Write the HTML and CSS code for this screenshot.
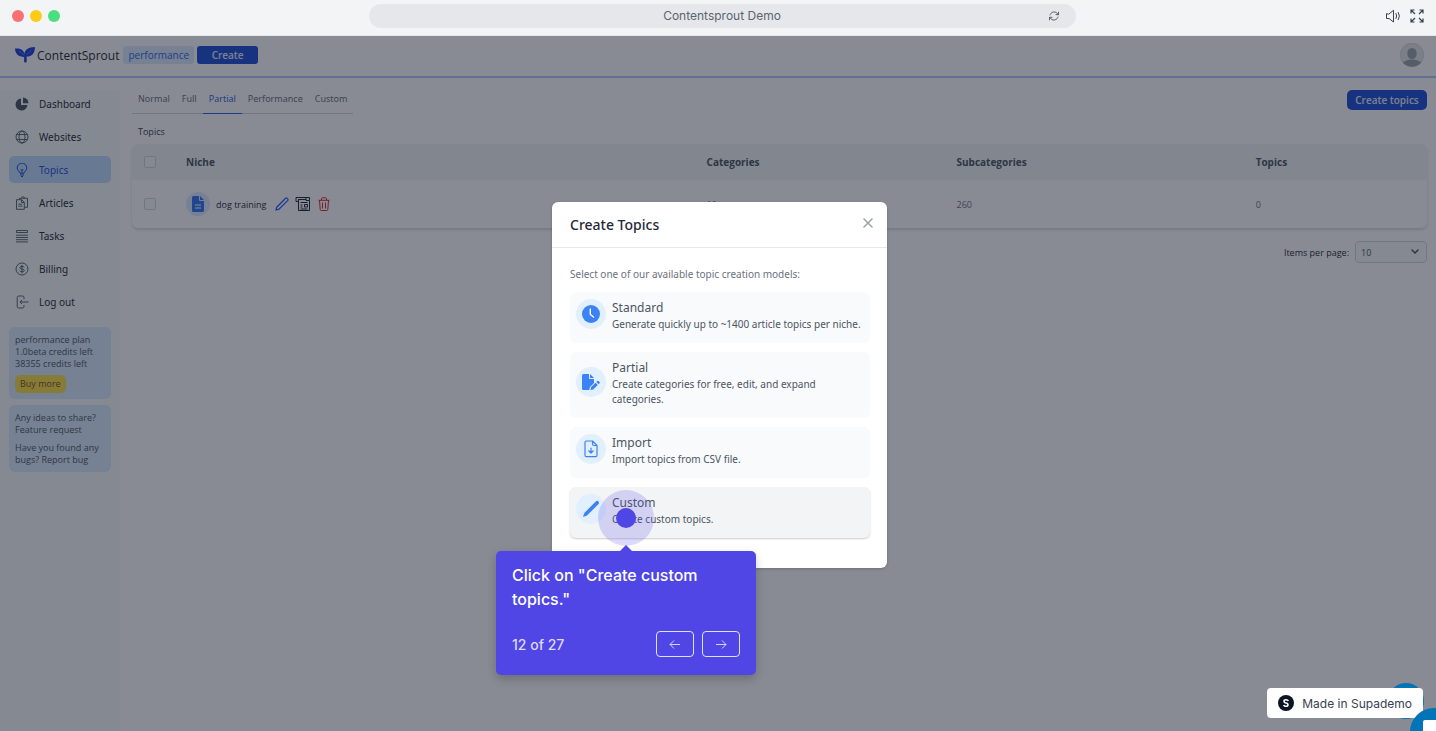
FILE: index.html
```html
<!DOCTYPE html>
<html lang="en">
<head>
<meta charset="utf-8">
<title>Contentsprout Demo</title>
<link rel="stylesheet" href="styles.css">
</head>
<body>
<div class="browser-bar">
  <div class="lights"><span class="light red"></span><span class="light yellow"></span><span class="light green"></span></div>
  <div class="address">
    <span class="address-title">Contentsprout Demo</span>
    <button class="icon-btn" aria-label="Restart"><svg width="12" height="12" viewBox="0 0 24 24" fill="none" stroke="#4b5563" stroke-width="1.8" stroke-linecap="round" stroke-linejoin="round"><path d="M16 9.3h5V4.3M3 19.600v-5h5M3 14.600l3.200 3.200a8.250 8.250 0 0 0 13.800-3.700M4 9.900a8.250 8.250 0 0 1 13.800-3.700L21 9.300"/></svg></button>
  </div>
  <div class="bar-tools">
    <button class="icon-btn" aria-label="Sound"><svg width="16" height="16" viewBox="0 0 16 16" fill="none" stroke="#374151" stroke-linecap="round" stroke-linejoin="round"><path d="M1.500 6v4.500h2.500L8.500 14V2.300L4 6zM11 5.500q1.500 2.500 0 5M13.300 4.500q2.400 3.600 0 7.200"/></svg></button>
    <button class="icon-btn" aria-label="Full screen"><svg width="14" height="14" viewBox="0 0 14 14" fill="none" stroke="#374151" stroke-width="1.200"><path d="M1 4.500V1h3.500M1 1l4 4M9.500 1H13v3.500M13 1L9 5M1 9.500V13h3.500M1 13l4-4M13 9.500V13H9.500M13 13L9 9"/></svg></button>
  </div>
</div>

<div class="stage">
  <header class="app-header">
    <svg class="logo" width="20" height="16" viewBox="0 0 20 16" fill="#1d3fe0"><path d="M0 1.500C4.500 1 8.500 2 9.500 7c.3-4 3.500-7 10.500-7-.2 6.500-3 9.500-8.300 9.600V14.500q0 1-1 1h-.6q-1 0-1-1V9.900C3.500 9.900.3 7 0 1.500z"/><path d="M4 4.200l5.300 4M16.500 3l-5 4.700" stroke="#8f98b5" stroke-width=".7"/></svg>
    <span class="brand">ContentSprout</span>
    <span class="plan-tag">performance</span>
    <button class="btn create-btn">Create</button>
    <svg class="avatar" width="24" height="24" viewBox="0 0 24 24"><circle cx="12" cy="12" r="11.700" fill="#e3e6e9" stroke="#c2c7cd" stroke-width=".6"/><ellipse cx="12" cy="10.500" rx="4.700" ry="5.500" fill="#9aa1a9"/><path d="M3 20q2-3.500 9-3.500t9 3.500q-4 3.800-9 3.800T3 20z" fill="#9aa1a9"/></svg>
  </header>

  <div class="app-body">
    <aside class="sidebar">
      <nav class="nav">
        <a class="nav-item" href="#"><svg width="14" height="14" viewBox="0 0 14 14" fill="#4b5563"><path d="M6 1.500V8h6.500A6 6 0 1 1 6 1.500z"/><path d="M8 0.500A5.800 5.800 0 0 1 13.500 6.200H8z"/></svg>Dashboard</a>
        <a class="nav-item" href="#"><svg width="14" height="14" viewBox="0 0 14 14" fill="none" stroke="#4b5563" stroke-width=".9"><circle cx="7" cy="7" r="6"/><ellipse cx="7" cy="7" rx="3" ry="6"/><path d="M1.500 4.500h11M1.500 9.500h11"/></svg>Websites</a>
        <a class="nav-item active" href="#"><svg width="14" height="14" viewBox="0 0 14 14" fill="none" stroke="#1d4ed8" stroke-width="1"><path d="M5 10.300C5 8.500 2.200 7.500 2.200 4.900a4.800 4.800 0 0 1 9.600 0C11.800 7.500 9 8.500 9 10.300zM5 12h4M6 13.500h2M7 10V7M5.500 6.500L7 7.200l1.500-.7"/></svg>Topics</a>
        <a class="nav-item" href="#"><svg width="14" height="14" viewBox="0 0 14 14" fill="none" stroke="#4b5563" stroke-width=".9"><path d="M4.500 3.500V2.300h1.700Q6.500.8 8 .8t1.800 1.500h2.700v9H9.500M1.500 3.700h5.200l2.600 2.600v7H1.500zM6.500 3.700v2.800h2.800M3.300 8.200h4M3.300 10.200h4M6.500 2.300h3.300"/></svg>Articles</a>
        <a class="nav-item" href="#"><svg width="14" height="14" viewBox="0 0 14 14" fill="none" stroke="#4b5563" stroke-width=".9"><path d="M1.500 1.500h11v2h-11zM1 6.200h12M1 8.500h12M1 10.700h12M1 12.900h12"/></svg>Tasks</a>
        <a class="nav-item" href="#"><svg width="14" height="14" viewBox="0 0 14 14" fill="none" stroke="#4b5563" stroke-width=".9"><circle cx="7" cy="7" r="6"/><path d="M9.200 5.300Q8.700 4.300 7 4.300 4.900 4.300 4.900 5.600T7 7t2.200 1.500T7 9.800q-1.900 0-2.300-1.200M7 3v8.200"/></svg>Billing</a>
        <a class="nav-item" href="#"><svg width="14" height="14" viewBox="0 0 14 14" fill="none" stroke="#4b5563" stroke-width=".9"><path d="M9 4V2.500Q9 1 7.500 1H3.700Q2.200 1 2.200 2.500v9Q2.200 13 3.700 13h3.800Q9 13 9 11.500V10M13.500 7H5M7 5L5 7l2 2"/></svg>Log out</a>
      </nav>
      <section class="side-card">
        <p>performance plan<br>1.0beta credits left<br>38355 credits left</p>
        <button class="buy-btn">Buy more</button>
      </section>
      <section class="side-card">
        <p>Any ideas to share? Feature request</p>
        <p>Have you found any bugs? Report bug</p>
      </section>
    </aside>

    <main class="content">
      <div class="toolbar">
        <nav class="tabs">
          <a class="tab" href="#">Normal</a><a class="tab" href="#">Full</a><a class="tab current" href="#">Partial</a><a class="tab" href="#">Performance</a><a class="tab" href="#">Custom</a>
        </nav>
        <button class="btn topics-btn">Create topics</button>
      </div>
      <h2 class="section-title">Topics</h2>
      <table class="topics">
        <colgroup><col class="c-check"><col class="c-niche"><col class="c-cat"><col class="c-sub"><col></colgroup>
        <thead><tr><th><input type="checkbox" aria-label="Select all"></th><th>Niche</th><th>Categories</th><th>Subcategories</th><th>Topics</th></tr></thead>
        <tbody><tr>
          <td><input type="checkbox" aria-label="Select dog training"></td>
          <td><div class="niche">
            <span class="doc-badge"><svg width="12" height="16" viewBox="0 0 12 16"><path d="M1.500 0H7v4.200q0 .8.800.8H12v9.500q0 1.500-1.500 1.500h-9Q0 16 0 14.500v-13Q0 0 1.500 0zM8 0l4 4H8z" fill="#3274f5"/><path d="M3 9h6M3 12h6" stroke="#fff" stroke-width="1.200"/></svg></span>
            <span class="niche-name">dog training</span>
            <button class="icon-btn" aria-label="Edit"><svg width="14" height="14" viewBox="0 0 14 14" fill="none" stroke="#1d5bff" stroke-width="1.200"><path d="M1 13l.8-3L10.600 1.200q.7-.6 1.300 0l.9.900q.6.600 0 1.300L4 12.200zM2 10L9.700 2.300"/></svg></button>
            <button class="icon-btn" aria-label="Articles"><svg width="16" height="16" viewBox="0 0 16 16" fill="none" stroke="#1f2937" stroke-width="1"><path d="M3.500 5.500H1V1.500h13.500v3M3.500 4v10.500h11V4.500H11V1.500M3 3.500h8M5.500 6.500h7M5.500 9h2M5.500 11h2M5.500 13h7M9.500 8.500h3v2.500h-3z"/></svg></button>
            <button class="icon-btn" aria-label="Delete"><svg width="14" height="14" viewBox="0 0 14 14" fill="none" stroke="#dc2626" stroke-width="1"><path d="M1.500 3.300h11M4.500 3V1.500q0-.7.700-.7h3.600q.7 0 .7.700V3M2.500 3.500l.7 9q.1 1 1.100 1h5.400q1 0 1.100-1l.7-9M5.500 5.500v6M8.500 5.500v6"/></svg></button>
          </div></td>
          <td>10</td><td>260</td><td>0</td>
        </tr></tbody>
      </table>
      <div class="pager">
        <label for="per-page">Items per page:</label>
        <span class="select-wrap"><select id="per-page"><option>10</option><option>25</option></select><svg width="8" height="6" viewBox="0 0 8 6" fill="none" stroke="#4b5563" stroke-width="1.500" stroke-linecap="round"><path d="M1 1l3 3 3-3"/></svg></span>
      </div>
    </main>
  </div>
  <span class="help-bubble"></span>

  <div class="overlay">
    <section class="modal" role="dialog" aria-labelledby="modal-title">
      <div class="modal-head">
        <h1 id="modal-title">Create Topics</h1>
        <button class="icon-btn" aria-label="Close"><svg width="12" height="12" viewBox="0 0 12 12" stroke="#9ca3af" stroke-width="1.600" stroke-linecap="round"><path d="M2 2l8 8M10 2l-8 8"/></svg></button>
      </div>
      <div class="modal-body">
        <p class="lead">Select one of our available topic creation models:</p>
        <button class="option">
          <span class="option-icon"><svg width="20" height="20" viewBox="0 0 20 20"><circle cx="10" cy="10" r="9" fill="#3b82f6"/><path d="M9.300 5v5q0 .5.400.8L12.500 13" fill="none" stroke="#fff" stroke-width="1.400" stroke-linecap="round"/></svg></span>
          <span class="option-text"><span class="option-name">Standard</span><span class="option-desc">Generate quickly up to ~1400 article topics per niche.</span></span>
        </button>
        <button class="option">
          <span class="option-icon"><svg width="20" height="20" viewBox="0 0 20 20" fill="#3b82f6"><path d="M2.500 2H8v4.200q0 .8.800.8H13v4l-4 4-.8 3H2.500Q1 18 1 16.500v-13Q1 2 2.500 2zM9 2l4 4H9z"/><path d="M10 15.300l4.600-4.600 2.200 2.200-4.600 4.600L9.500 18zM15.300 10l1-1q.6-.5 1.200 0l1.100 1.100q.5.600 0 1.200l-1 1z"/></svg></span>
          <span class="option-text"><span class="option-name">Partial</span><span class="option-desc">Create categories for free, edit, and expand categories.</span></span>
        </button>
        <button class="option">
          <span class="option-icon"><svg width="20" height="20" viewBox="0 0 20 20" fill="none" stroke="#3b82f6" stroke-width="1.200" stroke-linecap="round" stroke-linejoin="round"><path d="M5.500 2h6L16 6.500v9.700q0 1.500-1.500 1.500h-9Q4 17.700 4 16.200V3.500Q4 2 5.500 2zM11.500 2v3q0 1.500 1.500 1.500h3M10 9v5M7.700 11.800L10 14l2.300-2.200"/></svg></span>
          <span class="option-text"><span class="option-name">Import</span><span class="option-desc">Import topics from CSV file.</span></span>
        </button>
        <div class="target">
          <button class="option hovered">
            <span class="option-icon"><svg width="20" height="20" viewBox="0 0 20 20" fill="#3b82f6"><path d="M2 18l1.300-4L15 2.300q1.300-1 2.500.2 1.100 1.200.1 2.500L6 16.500z"/></svg></span>
            <span class="option-text"><span class="option-name">Custom</span><span class="option-desc">Create custom topics.</span></span>
          </button>
          <span class="hotspot"><span class="hotspot-dot"></span></span>
          <div class="tooltip">
            <p class="tooltip-text">Click on "Create custom topics."</p>
            <div class="tooltip-foot">
              <span class="step">12 of 27</span>
              <button class="step-btn" aria-label="Previous"><svg width="12" height="12" viewBox="0 0 12 12"><path d="M11 6.500H1M5 2.500l-4 4 4 4"/></svg></button>
              <button class="step-btn" aria-label="Next"><svg width="12" height="12" viewBox="0 0 12 12"><path d="M1 6.500h10M7 2.500l4 4-4 4"/></svg></button>
            </div>
          </div>
        </div>
      </div>
    </section>
  </div>

  <a class="made-in" href="#"><svg width="16" height="16" viewBox="0 0 16 16"><circle cx="8" cy="8" r="8" fill="#0b1524"/><path d="M10.300 6Q9.800 4.700 8 4.700 6 4.700 6 6.200T8 8t2 1.800T8 11.300Q6.200 11.300 5.700 9.900" fill="none" stroke="#fff" stroke-width="1.600"/></svg>Made in Supademo</a>
  <span class="chat-bubble"><span class="chat-glyph"></span></span>
</div>
</body>
</html>
```
FILE: styles.css
```css
* { box-sizing: border-box; }
body {
  margin: 0;
  height: 100vh;
  display: flex;
  flex-direction: column;
  overflow: hidden;
  font-family: "Noto Sans", "Open Sans", sans-serif;
  font-size: 10px;
  color: #1f2937;
  background: #fff;
}
p, h1, h2 { margin: 0; font-weight: 400; }
a { color: inherit; text-decoration: none; }
button { font: inherit; color: inherit; border: 0; padding: 0; background: none; cursor: pointer; }
svg { display: block; flex: none; }
.icon-btn { display: flex; }

/* Browser bar */
.browser-bar {
  flex: none;
  height: 36px;
  display: grid;
  grid-template-columns: 1fr 715px 1fr;
  align-items: center;
  padding: 0 12px 4px;
  background: #f3f4f6;
  border-bottom: 1px solid #e5e7eb;
  font-family: Inter, sans-serif;
}
.lights { display: flex; gap: 6px; }
.light { width: 12px; height: 12px; border-radius: 50%; }
.red { background: #f87171; }
.yellow { background: #facc15; }
.green { background: #4ade80; }
.address {
  display: flex;
  align-items: center;
  height: 24px;
  margin-left: 8px;
  padding: 0 16px 0 28px;
  border-radius: 12px;
  background: #e5e7eb;
}
.address-title { flex: 1; text-align: center; font-size: 12px; color: #5b6472; }
.bar-tools { display: flex; justify-content: flex-end; align-items: center; gap: 9px; }

/* Application */
.stage { position: relative; flex: 1; min-height: 0; overflow: hidden; }
.app-header {
  display: flex;
  align-items: center;
  height: 42px;
  padding: 0 12px 2px 15px;
  border-bottom: 2px solid #b4c8fa;
  font-family: "Open Sans", sans-serif;
}
.brand { margin: 0 4px 0 2px; font-size: 12px; color: #1f2937; }
.plan-tag { padding: 0 5px; font-size: 10px; line-height: 18px; border-radius: 3px; background: #dbeafe; color: #2f66e6; }
.btn { background: #1d4ed8; color: #e6ebf8; font: 600 10px "Open Sans", sans-serif; }
.create-btn { margin-left: 3px; width: 61px; height: 18px; border-radius: 3px; }
.avatar { margin-left: auto; }

.app-body { display: flex; padding: 12px 9px 0 0; }
.sidebar { flex: none; width: 120px; height: 100vh; padding: 0 9px; background: #f9fafb; }
.nav { display: flex; flex-direction: column; gap: 6px; margin-bottom: 12px; }
.nav-item { display: flex; align-items: center; gap: 10px; height: 27px; padding: 0 6px; border-radius: 5px; color: #1f2937; }
.nav-item.active { background: #bfdbfe; color: #1d4ed8; }
.side-card { margin-bottom: 6px; padding: 7px 6px 6px; border-radius: 6px; background: #dbeafe; font: 9px/12px "Open Sans", sans-serif; color: #4b5563; }
.side-card p + p { margin-top: 6px; }
.buy-btn { margin-top: 5px; padding: 0 5px; height: 18px; border-radius: 5px; background: #fde047; color: #854d0e; }

.content { flex: 1; min-width: 0; padding-left: 12px; font-family: "Open Sans", sans-serif; }
.toolbar { display: flex; justify-content: space-between; align-items: flex-start; height: 24px; }
.tabs { display: flex; height: 24px; border-bottom: 1px solid #d1d5db; }
.tab { padding: 0 6px; font: 9px/17px "Noto Sans", sans-serif; color: #6b7280; }
.tab.current { height: 24px; border-bottom: 1px solid #2563eb; color: #2f66e6; }
.topics-btn { width: 80px; height: 20px; border-radius: 5px; }
.section-title { margin: 11px 6px 5px; font-size: 9px; line-height: 14px; color: #374151; }
.topics { width: 100%; table-layout: fixed; border-collapse: collapse; border-radius: 6px; box-shadow: 0 2px 3px rgba(0, 0, 0, .15); overflow: hidden; }
.c-check { width: 36px; }
.c-niche { width: 40.2%; }
.c-cat { width: 19.3%; }
.c-sub { width: 23.1%; }
.topics th { height: 36px; padding: 0 18px; background: #f3f4f6; text-align: left; font-size: 10px; color: #4b5563; }
.topics td { height: 48px; padding: 0 18px; font-size: 9px; color: #6b7280; }
.topics th:first-child, .topics td:first-child { padding: 0 12px; }
.topics input { appearance: none; display: block; width: 12px; height: 12px; margin: 0; border: 1px solid #d1d5db; border-radius: 2px; background: #f9fafb; }
.niche { display: flex; align-items: center; gap: 6px; }
.doc-badge { display: grid; place-items: center; width: 24px; height: 24px; border-radius: 50%; background: #dbeafe; }
.niche-name { color: #1f2937; margin-right: 2px; }
.pager { display: flex; justify-content: flex-end; align-items: center; gap: 6px; margin-top: 13px; font-size: 9px; }
.select-wrap { display: grid; align-items: center; width: 72px; }
.select-wrap > * { grid-area: 1 / 1; }
.select-wrap svg { justify-self: end; margin-right: 8px; pointer-events: none; }
.pager select { appearance: none; width: 100%; height: 22px; padding: 0 5px; border: 1px solid #d1d5db; border-radius: 4px; background: #f9fafb; color: #4b5563; font: inherit; }

/* Modal */
.overlay {
  position: absolute;
  inset: 0;
  display: flex;
  align-items: center;
  justify-content: center;
  padding: 3px 0 0 3px;
  background: rgba(17, 24, 39, .5);
}
.modal { width: 335px; border-radius: 6px; background: #fff; box-shadow: 0 1px 3px rgba(0, 0, 0, .2); }
.modal-head { display: flex; justify-content: space-between; align-items: flex-start; padding: 13px 13px 12px 18px; border-bottom: 1px solid #e5e7eb; }
.modal-head h1 { font-size: 14px; line-height: 20px; font-weight: 500; color: #1f2937; }
.modal-head .icon-btn { margin-top: 2px; }
.modal-body { display: flex; flex-direction: column; gap: 9px; padding: 18px 17px 30px 18px; }
.lead { line-height: 16px; color: #6b7280; margin-bottom: 1px; }
.option { display: flex; align-items: center; gap: 6px; width: 100%; padding: 7px 6px 9px; border-radius: 6px; background: #f9fafb; text-align: left; color: #4b5563; }
.option.hovered { background: #f3f4f6; box-shadow: 0 1px 2px rgba(0, 0, 0, .2); }
.option-icon { flex: none; display: grid; place-items: center; width: 30px; height: 30px; border-radius: 50%; background: #e1effe; margin-bottom: 5px; }
.option-text { display: flex; flex-direction: column; }
.option-name { font-size: 12px; line-height: 18px; }
.option-desc { font-size: 10px; line-height: 15px; padding-bottom: 2px; }

/* Guided step */
.target { position: relative; }
.hotspot { position: absolute; left: 28px; top: 3px; display: grid; place-items: center; width: 56px; height: 56px; border-radius: 50%; background: rgba(79, 70, 229, .2); }
.hotspot-dot { width: 20px; height: 20px; border-radius: 50%; background: #4f46e5; }
.tooltip { position: absolute; left: -74px; top: 64px; width: 260px; padding: 12px 16px 18px; border-radius: 5px; background: #4f46e5; color: #fff; font-family: Inter, sans-serif; box-shadow: 0 4px 10px rgba(0, 0, 0, .2); }
.tooltip::before { content: ""; position: absolute; left: 124px; top: -6px; border: 6px solid transparent; border-top: 0; border-bottom-color: #4f46e5; }
.tooltip-text { font-size: 16px; line-height: 24px; font-weight: 500; }
.tooltip-foot { display: flex; align-items: center; gap: 8px; margin-top: 20px; }
.step { flex: 1; font-size: 14px; font-weight: 500; color: #dcdafa; }
.step-btn { display: grid; place-items: center; width: 38px; height: 26px; border: 1px solid #e0e0fb; border-radius: 4px; }
.step-btn svg { fill: none; stroke: #d5d3f9; stroke-width: 1; }

/* Floating badges */
.help-bubble { position: absolute; right: 12px; bottom: 12px; width: 36px; height: 36px; border-radius: 50%; background: #0284d8; }
.made-in { position: absolute; right: 13px; bottom: 13px; display: flex; align-items: center; gap: 8px; height: 30px; padding: 0 11px; border-radius: 4px; background: #fff; color: #374151; font: 12px Inter, sans-serif; }
.help-bubble { z-index: 1; background: #0274b8; }
.made-in { z-index: 2; }
.chat-bubble { z-index: 3; position: absolute; right: -22px; bottom: -25px; width: 48px; height: 48px; border-radius: 50%; background: #0274b8; }
.chat-glyph { position: absolute; left: 13px; top: 12px; width: 22px; height: 22px; border-radius: 2px; background: #fff; }
```
